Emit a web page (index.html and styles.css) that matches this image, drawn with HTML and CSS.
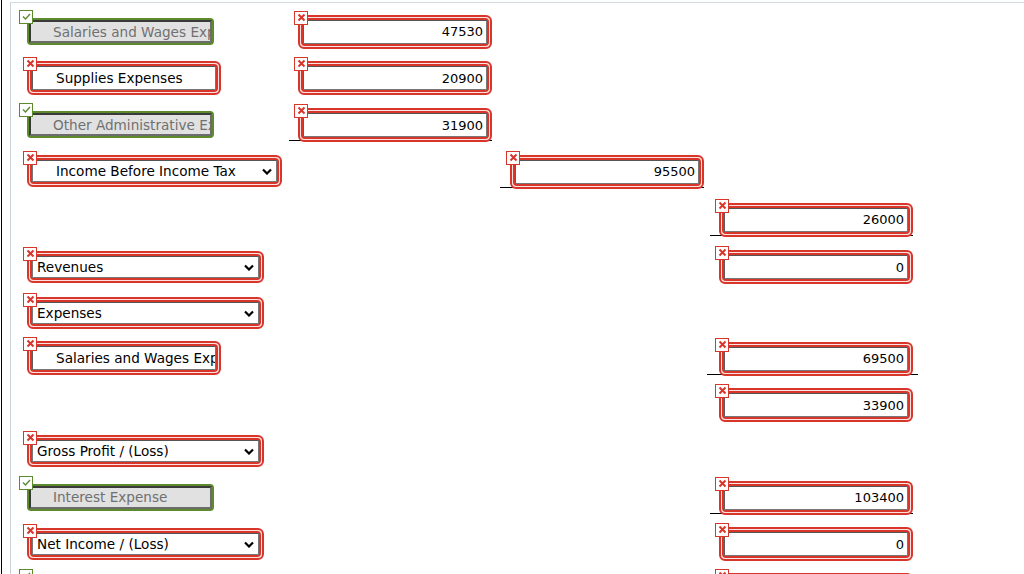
FILE: index.html
```html
<!DOCTYPE html>
<html lang="en">
<head>
<meta charset="utf-8">
<title>Income Statement</title>
<link rel="stylesheet" href="styles.css">
</head>
<body>
<div class="page">
  <div class="panel">
    <div class="rows">

      <div class="row h47">
        <div class="c1"><span class="ok"><span class="mark good"><svg viewBox="0 0 12 12"><polyline points="3,5.5 5.5,8 10,3"/></svg></span><input class="dis" value="Salaries and Wages Expense" disabled></span></div>
        <div class="c2"><span class="bad"><span class="mark wrong"><svg viewBox="0 0 12 12"><path d="M3.5 2.5 L9.5 8.5 M9.5 2.5 L3.5 8.5"/></svg></span><span class="ring"><input class="num" value="47530"></span></span></div>
      </div>

      <div class="row h46">
        <div class="c1"><span class="bad"><span class="mark wrong"><svg viewBox="0 0 12 12"><path d="M3.5 2.5 L9.5 8.5 M9.5 2.5 L3.5 8.5"/></svg></span><span class="ring"><input class="txt" value="Supplies Expenses"></span></span></div>
        <div class="c2"><span class="bad"><span class="mark wrong"><svg viewBox="0 0 12 12"><path d="M3.5 2.5 L9.5 8.5 M9.5 2.5 L3.5 8.5"/></svg></span><span class="ring"><input class="num" value="20900"></span></span></div>
      </div>

      <div class="row h47">
        <div class="c1"><span class="ok"><span class="mark good"><svg viewBox="0 0 12 12"><polyline points="3,5.5 5.5,8 10,3"/></svg></span><input class="dis" value="Other Administrative Expenses" disabled></span></div>
        <div class="c2 ul"><span class="bad"><span class="mark wrong"><svg viewBox="0 0 12 12"><path d="M3.5 2.5 L9.5 8.5 M9.5 2.5 L3.5 8.5"/></svg></span><span class="ring"><input class="num" value="31900"></span></span></div>
      </div>

      <div class="row h46">
        <div class="c1"><span class="bad"><span class="mark wrong"><svg viewBox="0 0 12 12"><path d="M3.5 2.5 L9.5 8.5 M9.5 2.5 L3.5 8.5"/></svg></span><span class="ring"><select class="sel wide indent"><option>Income Before Income Tax</option><option>Revenues</option><option>Expenses</option></select><svg class="chev" viewBox="0 0 10 7"><path d="M1 1.5 L5 5.5 L9 1.5"/></svg></span></span></div>
        <div class="c3 ul"><span class="bad"><span class="mark wrong"><svg viewBox="0 0 12 12"><path d="M3.5 2.5 L9.5 8.5 M9.5 2.5 L3.5 8.5"/></svg></span><span class="ring"><input class="num" value="95500"></span></span></div>
      </div>

      <div class="row h50">
        <div class="c4 ul"><span class="bad"><span class="mark wrong"><svg viewBox="0 0 12 12"><path d="M3.5 2.5 L9.5 8.5 M9.5 2.5 L3.5 8.5"/></svg></span><span class="ring"><input class="num" value="26000"></span></span></div>
      </div>

      <div class="row h46">
        <div class="c1"><span class="bad"><span class="mark wrong"><svg viewBox="0 0 12 12"><path d="M3.5 2.5 L9.5 8.5 M9.5 2.5 L3.5 8.5"/></svg></span><span class="ring"><select class="sel"><option>Revenues</option><option>Expenses</option><option>Gross Profit / (Loss)</option></select><svg class="chev" viewBox="0 0 10 7"><path d="M1 1.5 L5 5.5 L9 1.5"/></svg></span></span></div>
        <div class="c4"><span class="bad"><span class="mark wrong"><svg viewBox="0 0 12 12"><path d="M3.5 2.5 L9.5 8.5 M9.5 2.5 L3.5 8.5"/></svg></span><span class="ring"><input class="num" value="0"></span></span></div>
      </div>

      <div class="row h46">
        <div class="c1"><span class="bad"><span class="mark wrong"><svg viewBox="0 0 12 12"><path d="M3.5 2.5 L9.5 8.5 M9.5 2.5 L3.5 8.5"/></svg></span><span class="ring"><select class="sel"><option>Expenses</option><option>Revenues</option><option>Gross Profit / (Loss)</option></select><svg class="chev" viewBox="0 0 10 7"><path d="M1 1.5 L5 5.5 L9 1.5"/></svg></span></span></div>
      </div>

      <div class="row h44">
        <div class="c1"><span class="bad"><span class="mark wrong"><svg viewBox="0 0 12 12"><path d="M3.5 2.5 L9.5 8.5 M9.5 2.5 L3.5 8.5"/></svg></span><span class="ring"><input class="txt" value="Salaries and Wages Expense"></span></span></div>
        <div class="c4 ul long"><span class="bad"><span class="mark wrong"><svg viewBox="0 0 12 12"><path d="M3.5 2.5 L9.5 8.5 M9.5 2.5 L3.5 8.5"/></svg></span><span class="ring"><input class="num" value="69500"></span></span></div>
      </div>

      <div class="row h50">
        <div class="c4"><span class="bad"><span class="mark wrong"><svg viewBox="0 0 12 12"><path d="M3.5 2.5 L9.5 8.5 M9.5 2.5 L3.5 8.5"/></svg></span><span class="ring"><input class="num" value="33900"></span></span></div>
      </div>

      <div class="row h42">
        <div class="c1"><span class="bad"><span class="mark wrong"><svg viewBox="0 0 12 12"><path d="M3.5 2.5 L9.5 8.5 M9.5 2.5 L3.5 8.5"/></svg></span><span class="ring"><select class="sel"><option>Gross Profit / (Loss)</option><option>Revenues</option><option>Expenses</option></select><svg class="chev" viewBox="0 0 10 7"><path d="M1 1.5 L5 5.5 L9 1.5"/></svg></span></span></div>
      </div>

      <div class="row h50">
        <div class="c1"><span class="ok"><span class="mark good"><svg viewBox="0 0 12 12"><polyline points="3,5.5 5.5,8 10,3"/></svg></span><input class="dis" value="Interest Expense" disabled></span></div>
        <div class="c4 ul"><span class="bad"><span class="mark wrong"><svg viewBox="0 0 12 12"><path d="M3.5 2.5 L9.5 8.5 M9.5 2.5 L3.5 8.5"/></svg></span><span class="ring"><input class="num" value="103400"></span></span></div>
      </div>

      <div class="row h44">
        <div class="c1"><span class="bad"><span class="mark wrong"><svg viewBox="0 0 12 12"><path d="M3.5 2.5 L9.5 8.5 M9.5 2.5 L3.5 8.5"/></svg></span><span class="ring"><select class="sel"><option>Net Income / (Loss)</option><option>Revenues</option><option>Expenses</option></select><svg class="chev" viewBox="0 0 10 7"><path d="M1 1.5 L5 5.5 L9 1.5"/></svg></span></span></div>
        <div class="c4"><span class="bad"><span class="mark wrong"><svg viewBox="0 0 12 12"><path d="M3.5 2.5 L9.5 8.5 M9.5 2.5 L3.5 8.5"/></svg></span><span class="ring"><input class="num" value="0"></span></span></div>
      </div>

      <div class="row h48">
        <div class="c1"><span class="ok"><span class="mark good"><svg viewBox="0 0 12 12"><polyline points="3,5.5 5.5,8 10,3"/></svg></span><input class="dis" value="Income Tax Expense" disabled></span></div>
        <div class="c4"><span class="bad"><span class="mark wrong"><svg viewBox="0 0 12 12"><path d="M3.5 2.5 L9.5 8.5 M9.5 2.5 L3.5 8.5"/></svg></span><span class="ring"><input class="num" value=""></span></span></div>
      </div>

    </div>
  </div>
</div>
</body>
</html>
```

FILE: styles.css
```css
* { box-sizing: border-box; }

html, body {
  margin: 0;
  padding: 0;
  background: #fff;
}

body {
  width: 1024px;
  height: 574px;
  overflow: hidden;
  font-family: "DejaVu Sans", Verdana, sans-serif;
  font-size: 13px;
  color: #000;
}

.page {
  height: 574px;
  overflow: hidden;
  margin-left: 1px;
  padding-left: 8px;
  border-left: 1px solid #000;
}

.panel {
  height: 572px;
  overflow: hidden;
  margin-top: 2px;
  border-top: 1px solid #d3dbe4;
  border-left: 1px solid #c9d1da;
}

.rows {
  padding-top: 5px;
}

.row {
  display: grid;
  grid-template-columns: 278px 211px 210px 1fr;
  align-items: center;
}

.h42 { height: 42px; }
.h44 { height: 44px; }
.h46 { height: 46px; }
.h47 { height: 47px; }
.h48 { height: 48px; }
.h50 { height: 50px; }

.c1, .c2, .c3, .c4 {
  justify-self: start;
  display: flex;
}

.c1 { grid-column: 1; padding-left: 16px; }
.c2 { grid-column: 2; padding-left: 9px; }
.c3 { grid-column: 3; padding-left: 10px; }
.c4 { grid-column: 4; padding-left: 9px; }

.ul {
  border-bottom: 1px solid #000;
}
.ul > .bad {
  margin-bottom: -2px;
}
.ul.long {
  margin-left: -3px;
  padding-left: 12px;
  padding-right: 5px;
}

/* correct (green) disabled answer */
.ok {
  position: relative;
  display: inline-block;
  line-height: 0;
  border: 2px solid #5c8a2c;
  border-radius: 4px;
}

.dis {
  display: block;
  width: 183px;
  height: 23px;
  margin: 0;
  padding: 0 0 0 22px;
  border: 2px solid #3a3a3a;
  border-right-color: #6c6c6c;
  border-bottom-color: #6c6c6c;
  border-radius: 0;
  background: #e1e1e1;
  font-family: "DejaVu Sans", Verdana, sans-serif;
  font-size: 13.6px;
  color: #707070;
  -webkit-text-fill-color: #707070;
  opacity: 1;
}

/* incorrect (red) answer */
.bad {
  position: relative;
  display: inline-block;
  line-height: 0;
  padding: 1px;
  border: 2px solid #d9362b;
  border-radius: 6px;
  background: #fbe2e0;
}

.ring {
  position: relative;
  display: block;
  border: 2px solid #d9362b;
  border-radius: 4px;
  background: #fff;
}

.num, .txt {
  display: block;
  width: 184px;
  height: 24px;
  margin: 0;
  border: 1px solid #777;
  border-top-color: #555;
  border-left-color: #5e5e5e;
  border-radius: 0;
  background: #fff;
  font-family: "DejaVu Sans", Verdana, sans-serif;
  font-size: 13px;
  color: #000;
  outline: none;
}

.num {
  text-align: right;
  padding: 0 3px 0 3px;
}

.txt {
  text-align: left;
  padding: 0 0 0 23px;
  font-size: 13.6px;
}

.sel {
  display: block;
  -webkit-appearance: none;
  appearance: none;
  width: 227px;
  height: 22px;
  margin: 0;
  padding: 0 20px 0 4px;
  border: 1px solid #777;
  border-top-color: #555;
  border-radius: 0;
  background: #fff;
  font-family: "DejaVu Sans", Verdana, sans-serif;
  font-size: 13.6px;
  color: #000;
}

.sel.wide { width: 245px; }
.sel.indent { padding-left: 23px; }

.chev {
  position: absolute;
  right: 5px;
  top: 8px;
  width: 10px;
  height: 7px;
  fill: none;
  stroke: #000;
  stroke-width: 2.2;
  pointer-events: none;
}

/* status marks */
.mark {
  position: absolute;
  z-index: 2;
  width: 14px;
  height: 14px;
  background: #fff;
  border: 1px solid;
  line-height: 0;
}

.mark svg {
  display: block;
  width: 12px;
  height: 12px;
  fill: none;
}

.mark.wrong {
  left: -6px;
  top: -6px;
  border-color: #d9362b;
}
.mark.wrong svg {
  stroke: #d9362b;
  stroke-width: 2;
}

.mark.good {
  left: -10px;
  top: -10px;
  border-color: #5c8a2c;
}
.mark.good svg {
  stroke: #5c8a2c;
  stroke-width: 1.4;
}
```
